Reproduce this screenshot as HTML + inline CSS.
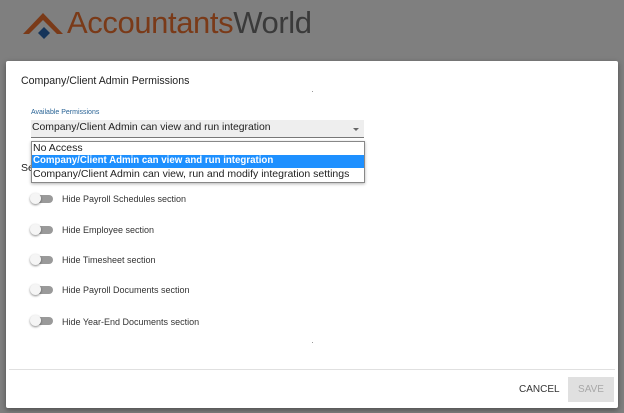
<!DOCTYPE html>
<html><head><style>
body{margin:0;width:624px;height:413px;background:#7f7f7f;position:relative;overflow:hidden;font-family:"Liberation Sans",sans-serif;}
.abs{position:absolute}
.dlg{left:6px;top:61px;width:612px;height:347px;background:#fff;border-radius:2px;box-shadow:0 2px 6px rgba(0,0,0,.4)}
.t{font-size:10.5px;color:#222;white-space:nowrap}
.tog{position:absolute;left:32px;width:21px;height:8px;border-radius:4px;background:#9a9a9a}
.tog:before{content:"";position:absolute;left:-2px;top:-2px;width:11px;height:11px;border-radius:50%;background:#f5f5f5;box-shadow:0 1px 2px rgba(0,0,0,.45)}
.lab{position:absolute;left:62px;font-size:9px;color:#333}
</style></head><body>
<svg class="abs" style="left:22px;top:8px" width="46" height="36">
<polygon points="1,26 21,5 41,26 35,26 21,12 7,26" fill="#7a3a18"/>
<polygon points="22,19 28,25 22,31 16,25" fill="#16355a"/>
</svg>
<div class="abs" style="left:67px;top:5px;font-size:31px;letter-spacing:-0.4px;white-space:nowrap"><span style="color:#7a3a18">Accountants</span><span style="color:#3a3a3a">World</span></div>
<div class="abs dlg"></div>
<div class="abs t" style="left:21px;top:75px;font-size:10.6px">Company/Client Admin Permissions</div>
<div class="abs" style="left:312px;top:91px;width:1px;height:1px;background:#999"></div>
<div class="abs" style="left:31px;top:109px;font-size:7px;color:#2a6496">Available Permissions</div>
<div class="abs" style="left:31px;top:120px;width:333px;height:17px;background:#eeeeee;border-bottom:1px solid #777"></div>
<div class="abs t" style="left:32px;top:122px;font-size:10.4px">Company/Client Admin can view and run integration</div>
<div class="abs" style="left:353px;top:128px;width:0;height:0;border-left:3px solid transparent;border-right:3px solid transparent;border-top:3px solid #666"></div>
<div class="abs t" style="left:21px;top:162px">Se</div>
<div class="abs" style="left:31px;top:141px;width:332px;height:40px;background:#fff;border:1px solid #888;box-shadow:0 1px 3px rgba(0,0,0,.3)"></div>
<div class="abs t" style="left:33px;top:142px">No Access</div>
<div class="abs" style="left:32px;top:155px;width:332px;height:13px;background:#1e90ff"></div>
<div class="abs t" style="left:33px;top:155px;color:#fff;font-weight:bold;font-size:9.7px">Company/Client Admin can view and run integration</div>
<div class="abs t" style="left:33px;top:168px;font-size:10.5px">Company/Client Admin can view, run and modify integration settings</div>
<div class="tog" style="top:195px"></div><div class="lab" style="top:194px">Hide Payroll Schedules section</div>
<div class="tog" style="top:226px"></div><div class="lab" style="top:225px">Hide Employee section</div>
<div class="tog" style="top:256px"></div><div class="lab" style="top:255px">Hide Timesheet section</div>
<div class="tog" style="top:286px"></div><div class="lab" style="top:285px">Hide Payroll Documents section</div>
<div class="tog" style="top:317px"></div><div class="lab" style="top:317px">Hide Year-End Documents section</div>
<div class="abs" style="left:312px;top:342px;width:1px;height:1px;background:#999"></div>
<div class="abs" style="left:9px;top:369px;width:606px;height:1px;background:#e0e0e0"></div>
<div class="abs" style="left:519px;top:384px;font-size:10px;color:#333">CANCEL</div>
<div class="abs" style="left:568px;top:377px;width:46px;height:25px;background:#e0e0e0;color:#a8a8a8;font-size:10px;text-align:center;line-height:25px">SAVE</div>
</body></html>
